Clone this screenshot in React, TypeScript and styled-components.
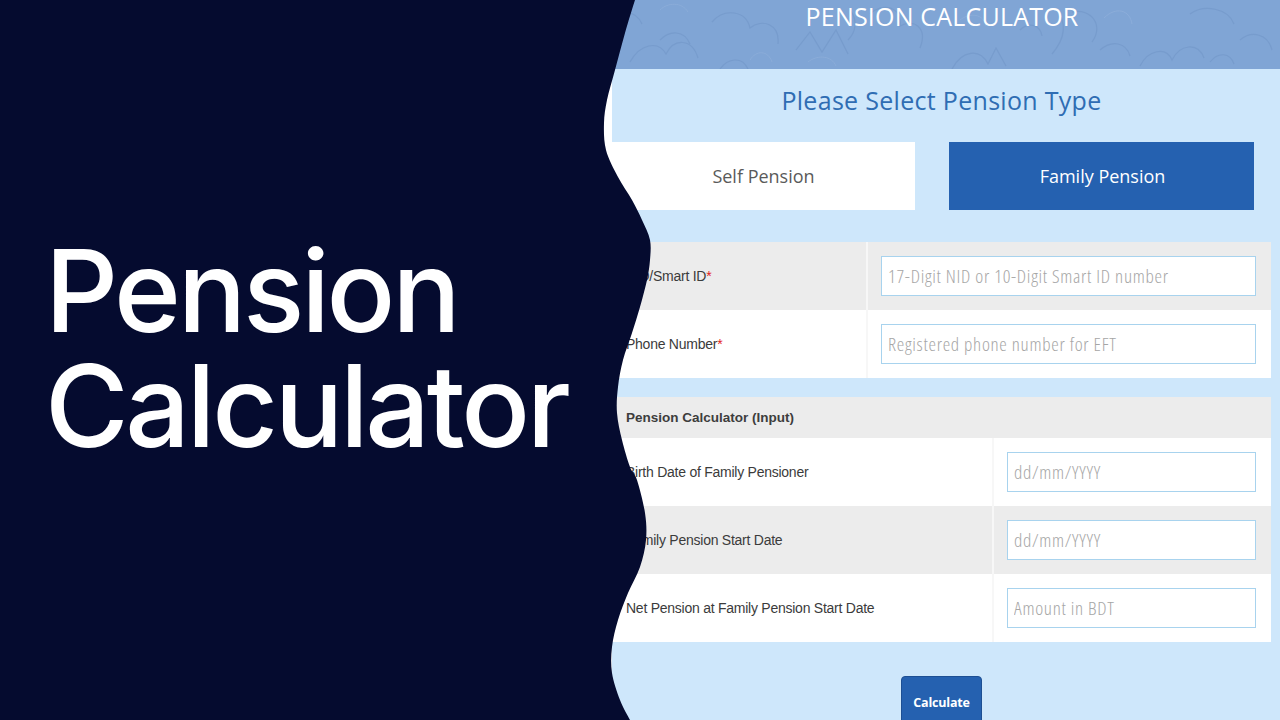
import React from "react";
import styled, { createGlobalStyle } from "styled-components";

const GlobalStyle = createGlobalStyle`
  html, body { margin: 0; padding: 0; background: #050b2f; }
  * { box-sizing: border-box; }
`;

const NAVY = "#050b2f";
const BRAND = "#2561b0";

const Page = styled.div`
  position: relative;
  display: flex;
  width: 1280px;
  height: 720px;
  overflow: hidden;
  background: ${NAVY};
`;

const TitlePanel = styled.section`
  flex: 0 0 600px;
  padding: 233px 0 0 45px;
`;

const Title = styled.h1`
  margin: 0;
  font-family: Inter, "Noto Sans", sans-serif;
  font-weight: 500;
  font-size: 114px;
  line-height: 115px;
  letter-spacing: -3.3px;
  color: #ffffff;
`;

const TitleLine = styled.span`
  display: block;
`;

const Shot = styled.section`
  flex: 1;
  display: flex;
  flex-direction: column;
  background: #ffffff;
`;

const Banner = styled.header`
  position: relative;
  height: 69px;
  flex: 0 0 69px;
  display: flex;
  justify-content: center;
  padding-top: 2px;
  background: #80a5d5;
  overflow: hidden;
`;

const BannerArt = styled.svg`
  position: absolute;
  inset: 0;
  width: 100%;
  height: 100%;
`;

const BannerTitle = styled.div`
  position: relative;
  margin-left: 4px;
  font-family: "Open Sans", "Noto Sans", sans-serif;
  font-size: 25px;
  line-height: 28px;
  color: #ffffff;
  letter-spacing: 0.2px;
`;

const Body = styled.main`
  flex: 1;
  margin-left: 12px;
  padding-right: 9px;
  background: #cee7fb;
  display: flex;
  flex-direction: column;
`;

const SectionHeading = styled.h2`
  margin: 16px 0 0;
  text-align: center;
  font-family: "Open Sans", "Noto Sans", sans-serif;
  font-weight: 400;
  font-size: 25px;
  line-height: 30px;
  letter-spacing: 0.3px;
  color: #2f6db3;
`;

const TypeRow = styled.div`
  display: grid;
  grid-template-columns: 315px 305px;
  column-gap: 34px;
  margin: 27px 0 0 -12px;
`;

const TypeButton = styled.button<{ $active?: boolean }>`
  height: 68px;
  border: none;
  padding: 0;
  font-family: "Open Sans", "Noto Sans", sans-serif;
  font-size: 18px;
  background: ${(p) => (p.$active ? BRAND : "#ffffff")};
  color: ${(p) => (p.$active ? "#ffffff" : "#5a5a5a")};
  padding-left: ${(p) => (p.$active ? "2px" : "12px")};
`;

const Table = styled.div<{ $gap: number }>`
  margin-top: ${(p) => p.$gap}px;
  display: flex;
  flex-direction: column;
`;

const Row = styled.div<{ $labelWidth: number; $shade?: boolean }>`
  display: grid;
  grid-template-columns: ${(p) => p.$labelWidth}px 1fr;
  height: 68px;
  background: ${(p) => (p.$shade ? "#ececec" : "#ffffff")};
`;

const HeadRow = styled.div`
  height: 41px;
  display: flex;
  align-items: center;
  padding-left: 14px;
  background: #ececec;
  font-family: "Liberation Sans", Arial, sans-serif;
  font-weight: 700;
  font-size: 13.5px;
  color: #3d3d3d;
`;

const Label = styled.div`
  display: flex;
  align-items: center;
  padding-left: 14px;
  font-family: "Liberation Sans", Arial, sans-serif;
  font-size: 14px;
  letter-spacing: -0.25px;
  color: #3b3b3b;
`;

const Star = styled.span`
  color: #e32222;
`;

const InputCell = styled.div`
  display: flex;
  align-items: center;
  padding: 0 15px 0 13px;
  border-left: 2px solid #f7f7f7;
`;

const Field = styled.input`
  width: 100%;
  height: 40px;
  border: 1px solid #a8d3ee;
  background: #ffffff;
  padding: 0 6px;
  outline: none;
  font-family: "Open Sans", "Noto Sans", sans-serif;
  font-stretch: 87.5%;
  font-weight: 350;
  font-size: 19px;
  letter-spacing: 0.7px;
  color: #444;
  &::placeholder {
    color: #a6a6a6;
  }
`;

const Actions = styled.div`
  display: flex;
  justify-content: center;
  margin-top: 34px;
`;

const CalcButton = styled.button`
  width: 81px;
  height: 52px;
  border: 1px solid #1d4f93;
  border-radius: 4px;
  background: ${BRAND};
  color: #ffffff;
  font-family: "Open Sans", "Noto Sans", sans-serif;
  font-weight: 700;
  font-size: 12.5px;
  letter-spacing: -0.2px;
  padding: 0;
`;

const Wave = styled.svg`
  position: absolute;
  left: 595px;
  top: 0;
  width: 70px;
  height: 720px;
`;

// edge of the navy panel: [offset from x=590, y]
const edge: [number, number][] = [
  [45, 0], [35, 33], [25, 70], [17, 100], [14, 123], [16, 150], [28, 177],
  [42, 200], [52, 220], [60, 240], [60, 260], [57, 280], [50, 307], [42, 333],
  [33, 360], [28, 387], [27, 413], [32, 440], [40, 467], [47, 480], [55, 513],
  [56, 540], [50, 567], [38, 593], [28, 620], [22, 647], [22, 673], [30, 700],
  [40, 720],
];

function smoothEdge(points: [number, number][], shift: number): string {
  const pts = points.map(([x, y]) => [x + shift, y] as [number, number]);
  let d = `M0,0 L${pts[0][0]},${pts[0][1]}`;
  for (let i = 0; i < pts.length - 1; i++) {
    const p0 = pts[i - 1] || pts[i];
    const p1 = pts[i];
    const p2 = pts[i + 1];
    const p3 = pts[i + 2] || p2;
    const c1x = p1[0] + (p2[0] - p0[0]) / 6;
    const c1y = p1[1] + (p2[1] - p0[1]) / 6;
    const c2x = p2[0] - (p3[0] - p1[0]) / 6;
    const c2y = p2[1] - (p3[1] - p1[1]) / 6;
    d += ` C${c1x.toFixed(1)},${c1y.toFixed(1)} ${c2x.toFixed(1)},${c2y.toFixed(1)} ${p2[0]},${p2[1]}`;
  }
  return d + " L0,720 Z";
}

// faint line-art ornament behind the banner title
const BannerDoodles = () => (
  <BannerArt viewBox="0 0 680 69" preserveAspectRatio="none">
    <g fill="none" stroke="#6f94c6" strokeWidth="1.2" opacity="0.5">
      <path d="M30 62 C40 44 58 40 66 54 C74 38 92 38 98 58" />
      <path d="M112 22 C124 8 146 10 150 28 C162 18 180 24 178 44" />
      <path d="M120 69 C128 58 142 56 148 69" />
      <path d="M196 50 L210 32 L222 52 L236 30 L248 54" />
      <path d="M270 14 C282 2 302 6 300 26 C314 18 328 28 320 48" />
      <path d="M352 69 C362 50 380 48 388 64 L396 48 L406 66" />
      <path d="M456 8 C468 24 464 40 452 54 M472 12 C492 8 504 26 492 42" />
      <path d="M540 66 C548 50 566 46 572 60 C580 44 598 42 604 58" />
      <path d="M590 14 C604 4 628 8 634 24" />
      <path d="M640 40 C652 30 668 34 672 50" />
      <path d="M8 20 C18 8 36 10 42 24" />
      <path d="M420 30 C428 22 440 24 442 36" />
      <path d="M60 40 C70 30 84 30 90 44 M250 10 C258 20 256 32 248 40" />
      <path d="M500 50 C512 40 526 42 530 56 M610 62 C618 52 630 52 634 64" />
    </g>
    <g fill="none" stroke="#98b6de" strokeWidth="1" opacity="0.45">
      <path d="M60 10 C68 2 82 2 88 12" />
      <path d="M208 62 C218 54 232 56 236 66" />
      <path d="M504 18 C516 6 530 10 532 24" />
      <path d="M360 20 C370 12 384 14 386 26" />
      <path d="M150 60 C156 50 168 50 172 62" />
    </g>
  </BannerArt>
);

type FieldRow = { label: string; required?: boolean; placeholder: string };

const idRows: FieldRow[] = [
  { label: "NID/Smart ID", required: true, placeholder: "17-Digit NID or 10-Digit Smart ID number" },
  { label: "Phone Number", required: true, placeholder: "Registered phone number for EFT" },
];

const calcRows: FieldRow[] = [
  { label: "Birth Date of Family Pensioner", placeholder: "dd/mm/YYYY" },
  { label: "Family Pension Start Date", placeholder: "dd/mm/YYYY" },
  { label: "Net Pension at Family Pension Start Date", placeholder: "Amount in BDT" },
];

const FormRow = ({ row, labelWidth, shade }: { row: FieldRow; labelWidth: number; shade: boolean }) => (
  <Row $labelWidth={labelWidth} $shade={shade}>
    <Label>
      {row.label}
      {row.required && <Star>*</Star>}
    </Label>
    <InputCell>
      <Field placeholder={row.placeholder} />
    </InputCell>
  </Row>
);

export default function App() {
  return (
    <>
      <GlobalStyle />
      <Page>
        <TitlePanel>
          <Title>
            <TitleLine>Pension</TitleLine>
            <TitleLine>Calculator</TitleLine>
          </Title>
        </TitlePanel>
        <Shot>
          <Banner>
            <BannerDoodles />
            <BannerTitle>PENSION CALCULATOR</BannerTitle>
          </Banner>
          <Body>
            <SectionHeading>Please Select Pension Type</SectionHeading>
            <TypeRow>
              <TypeButton>Self Pension</TypeButton>
              <TypeButton $active>Family Pension</TypeButton>
            </TypeRow>
            <Table $gap={32}>
              {idRows.map((r, i) => (
                <FormRow key={r.label} row={r} labelWidth={254} shade={i % 2 === 0} />
              ))}
            </Table>
            <Table $gap={19}>
              <HeadRow>Pension Calculator (Input)</HeadRow>
              {calcRows.map((r, i) => (
                <FormRow key={r.label} row={r} labelWidth={380} shade={i % 2 === 1} />
              ))}
            </Table>
            <Actions>
              <CalcButton>Calculate</CalcButton>
            </Actions>
          </Body>
        </Shot>
        <Wave viewBox="0 0 70 720" preserveAspectRatio="none">
          <path d={smoothEdge(edge, -5)} fill={NAVY} />
        </Wave>
      </Page>
    </>
  );
}
